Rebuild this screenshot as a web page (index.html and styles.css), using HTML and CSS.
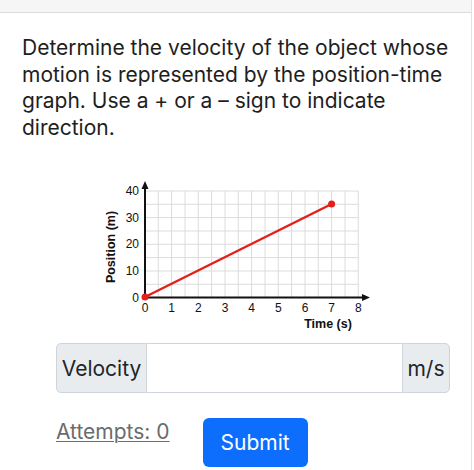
FILE: index.html
```html
<!DOCTYPE html>
<html>
<head>
<meta charset="utf-8">
<link rel="stylesheet" href="styles.css">
</head>
<body>
<div class="page">
  <div class="topbar"></div>
  <p class="question">Determine the velocity of the object whose motion is represented by the position-time graph. Use a + or a &ndash; sign to indicate direction.</p>
  <svg class="graph" width="280" height="160" viewBox="95 178 280 160" xmlns="http://www.w3.org/2000/svg">
    <g class="grid">
      <line x1="158.3" y1="191" x2="158.3" y2="297"/>
      <line x1="171.6" y1="191" x2="171.6" y2="297"/>
      <line x1="185" y1="191" x2="185" y2="297"/>
      <line x1="198.3" y1="191" x2="198.3" y2="297"/>
      <line x1="211.6" y1="191" x2="211.6" y2="297"/>
      <line x1="225" y1="191" x2="225" y2="297"/>
      <line x1="238.3" y1="191" x2="238.3" y2="297"/>
      <line x1="251.6" y1="191" x2="251.6" y2="297"/>
      <line x1="265" y1="191" x2="265" y2="297"/>
      <line x1="278.3" y1="191" x2="278.3" y2="297"/>
      <line x1="291.6" y1="191" x2="291.6" y2="297"/>
      <line x1="305" y1="191" x2="305" y2="297"/>
      <line x1="318.3" y1="191" x2="318.3" y2="297"/>
      <line x1="331.6" y1="191" x2="331.6" y2="297"/>
      <line x1="345" y1="191" x2="345" y2="297"/>
      <line x1="358.3" y1="191" x2="358.3" y2="297"/>
      <line x1="145" y1="191" x2="358.3" y2="191"/>
      <line x1="145" y1="204.3" x2="358.3" y2="204.3"/>
      <line x1="145" y1="217.6" x2="358.3" y2="217.6"/>
      <line x1="145" y1="231" x2="358.3" y2="231"/>
      <line x1="145" y1="244.3" x2="358.3" y2="244.3"/>
      <line x1="145" y1="257.6" x2="358.3" y2="257.6"/>
      <line x1="145" y1="271" x2="358.3" y2="271"/>
      <line x1="145" y1="284.3" x2="358.3" y2="284.3"/>
    </g>
    <g class="axes">
      <line x1="145" y1="297.5" x2="145" y2="186"/>
      <line x1="144" y1="297.5" x2="364" y2="297.5"/>
    </g>
    <polygon class="arrow" points="145,181 141.5,189 148.5,189"/>
    <polygon class="arrow" points="370,297.5 362,294 362,301"/>
    <g class="ylabels">
      <text x="139" y="195">40</text>
      <text x="139" y="221.6">30</text>
      <text x="139" y="248.3">20</text>
      <text x="139" y="275">10</text>
      <text x="139" y="301.5">0</text>
    </g>
    <g class="xlabels">
      <text x="145" y="312">0</text>
      <text x="171.6" y="312">1</text>
      <text x="198.3" y="312">2</text>
      <text x="225" y="312">3</text>
      <text x="251.6" y="312">4</text>
      <text x="278.3" y="312">5</text>
      <text x="305" y="312">6</text>
      <text x="331.6" y="312">7</text>
      <text x="358.3" y="312">8</text>
    </g>
    <text class="axis-title" x="328" y="328">Time (s)</text>
    <text class="axis-title" x="0" y="0" transform="translate(115 247) rotate(-90)">Position (m)</text>
    <line class="motion" x1="145" y1="297" x2="331.6" y2="204"/>
    <circle class="dot" cx="145" cy="297" r="3.5"/>
    <circle class="dot" cx="331.6" cy="204" r="3.5"/>
  </svg>
  <div class="input-group">
    <span class="addon addon-left">Velocity</span>
    <input class="field" type="text" aria-label="Velocity">
    <span class="addon addon-right">m/s</span>
  </div>
  <div class="actions">
    <a class="attempts" href="#">Attempts: 0</a>
    <button class="submit" type="button">Submit</button>
  </div>
</div>
</body>
</html>
```
FILE: styles.css
```css
html, body {
  margin: 0;
  padding: 0;
  background: #ffffff;
}
body {
  font-family: Inter, "Liberation Sans", Arial, sans-serif;
  color: #212529;
}
.page {
  width: 471px;
  min-height: 470px;
  border-right: 1px solid #e2e2e2;
  box-sizing: content-box;
}
.topbar {
  height: 12px;
  background: #f6f6f6;
  border-bottom: 1px solid #dcdcdc;
}
.question {
  margin: 22px 0 0 0;
  padding: 0 20px 0 22px;
  font-size: 21px;
  line-height: 26.5px;
  color: #1e1e1e;
}
.graph {
  display: block;
  margin: 37px 0 0 95px;
}
.grid line {
  stroke: #dcdcdc;
  stroke-width: 1;
}
.axes line {
  stroke: #111111;
  stroke-width: 2;
}
.arrow {
  fill: #111111;
}
.ylabels text {
  font-family: "Liberation Sans", Arial, sans-serif;
  font-size: 12px;
  text-anchor: end;
  fill: #111111;
}
.xlabels text {
  font-family: "Liberation Sans", Arial, sans-serif;
  font-size: 12px;
  text-anchor: middle;
  fill: #111111;
}
.axis-title {
  font-family: "Liberation Sans", Arial, sans-serif;
  font-size: 12.5px;
  font-weight: bold;
  text-anchor: middle;
  fill: #111111;
}
.motion {
  stroke: #e3211c;
  stroke-width: 2.5;
  stroke-linecap: round;
}
.dot {
  fill: #e3211c;
}
.input-group {
  display: flex;
  margin: 5px 0 0 56px;
  width: 394px;
  height: 50px;
  box-sizing: border-box;
}
.addon {
  display: flex;
  align-items: center;
  background: #e9ecef;
  border: 1px solid #ced4da;
  font-size: 21px;
  color: #212529;
  padding: 0 6px;
}
.addon-left {
  width: 91px;
  box-sizing: border-box;
  justify-content: center;
  border-radius: 5px 0 0 5px;
}
.addon-right {
  width: 48px;
  box-sizing: border-box;
  padding: 0 4px;
  justify-content: center;
  border-radius: 0 5px 5px 0;
}
.field {
  flex: 1;
  min-width: 0;
  border: 1px solid #ced4da;
  border-left: none;
  border-right: none;
  margin: 0;
  padding: 0 10px;
  font-size: 21px;
  font-family: inherit;
  outline: none;
  background: #ffffff;
}
.actions {
  display: flex;
  align-items: flex-start;
  margin: 25px 0 0 56px;
  gap: 33px;
}
.attempts {
  font-size: 21px;
  line-height: 26px;
  margin-top: 1px;
  color: #6c6c6c;
  text-decoration: underline;
  text-underline-offset: 2px;
  text-decoration-thickness: 1px;
}
.submit {
  width: 105px;
  height: 49px;
  border: none;
  border-radius: 6px;
  background: #0d6efd;
  color: #ffffff;
  font-family: Inter, "Liberation Sans", Arial, sans-serif;
  font-size: 21px;
  padding: 0;
}
```
